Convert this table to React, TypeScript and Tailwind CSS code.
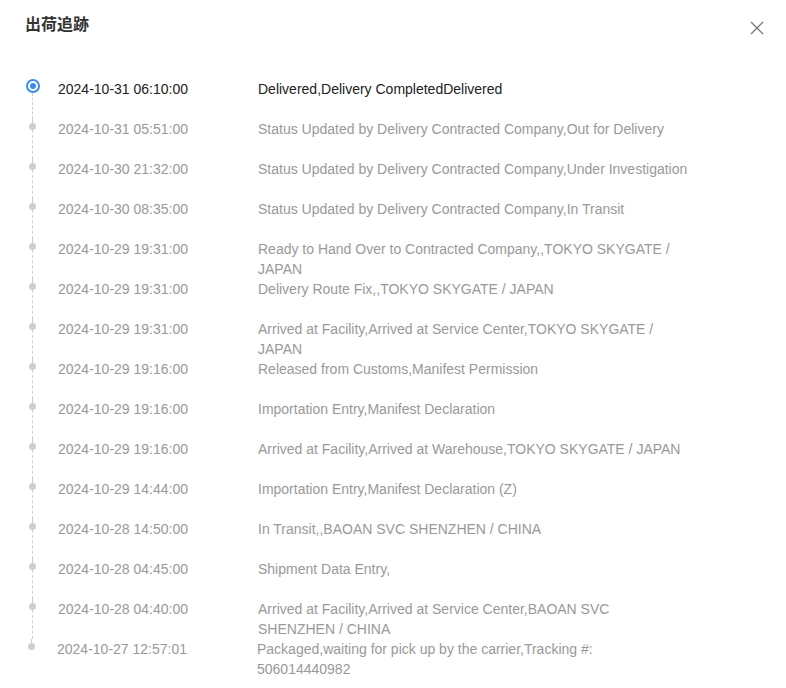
import React from "react";

type Track = { time: string; text: string };

const tracks: Track[] = [
  { time: "2024-10-31 06:10:00", text: "Delivered,Delivery CompletedDelivered" },
  { time: "2024-10-31 05:51:00", text: "Status Updated by Delivery Contracted Company,Out for Delivery" },
  { time: "2024-10-30 21:32:00", text: "Status Updated by Delivery Contracted Company,Under Investigation" },
  { time: "2024-10-30 08:35:00", text: "Status Updated by Delivery Contracted Company,In Transit" },
  { time: "2024-10-29 19:31:00", text: "Ready to Hand Over to Contracted Company,,TOKYO SKYGATE / JAPAN" },
  { time: "2024-10-29 19:31:00", text: "Delivery Route Fix,,TOKYO SKYGATE / JAPAN" },
  { time: "2024-10-29 19:31:00", text: "Arrived at Facility,Arrived at Service Center,TOKYO SKYGATE / JAPAN" },
  { time: "2024-10-29 19:16:00", text: "Released from Customs,Manifest Permission" },
  { time: "2024-10-29 19:16:00", text: "Importation Entry,Manifest Declaration" },
  { time: "2024-10-29 19:16:00", text: "Arrived at Facility,Arrived at Warehouse,TOKYO SKYGATE / JAPAN" },
  { time: "2024-10-29 14:44:00", text: "Importation Entry,Manifest Declaration (Z)" },
  { time: "2024-10-28 14:50:00", text: "In Transit,,BAOAN SVC SHENZHEN / CHINA" },
  { time: "2024-10-28 04:45:00", text: "Shipment Data Entry," },
  { time: "2024-10-28 04:40:00", text: "Arrived at Facility,Arrived at Service Center,BAOAN SVC SHENZHEN / CHINA" },
];

function Row({ item, first }: { item: Track; first: boolean }) {
  return (
    <div className="flex min-h-[40px] items-stretch">
      <div className="flex w-[13px] flex-col items-center">
        {first ? (
          <div className="flex h-[14px] w-[14px] shrink-0 items-center justify-center rounded-full border-2 border-[#3b8cf0]">
            <div className="h-[6px] w-[6px] rounded-full bg-[#3b8cf0]" />
          </div>
        ) : (
          <>
            <div className="h-[4px] border-l border-dashed border-[#cfcfcf]" />
            <div className="h-[7px] w-[7px] rounded-full bg-[#cfcfd3]" />
          </>
        )}
        <div className="flex-1 border-l border-dashed border-[#cfcfcf]" />
      </div>
      <div
        className={
          "ml-[19px] w-[200px] shrink-0 leading-[20px] " +
          (first ? "text-[#222]" : "text-[#999]")
        }
      >
        {item.time}
      </div>
      <div
        className={
          "w-[432px] leading-[20px] " + (first ? "text-[#222]" : "text-[#999]")
        }
      >
        {item.text}
      </div>
    </div>
  );
}

export default function App() {
  return (
    <div
      className="h-[688px] w-[786px] bg-white text-[14px]"
      style={{ fontFamily: '"Liberation Sans", Arial, "Noto Sans CJK JP", sans-serif' }}
    >
      <div className="flex h-[79px] items-start justify-between pl-[25px] pr-[22px] pt-[12px]">
        <h1
          className="text-[16px] font-semibold leading-[22px] text-[#333]"
          style={{ fontFamily: '"Noto Sans CJK JP", sans-serif' }}
        >
          出荷追跡
        </h1>
        <button className="mt-[9px] text-[#777]">
          <svg width="14" height="14" viewBox="0 0 14 14" fill="none">
            <path d="M1 1L13 13M13 1L1 13" stroke="currentColor" strokeWidth="1.3" />
          </svg>
        </button>
      </div>
      <div className="pl-[26px]">
        {tracks.map((t, i) => (
          <Row key={i} item={t} first={i === 0} />
        ))}
        <div className="-ml-px flex min-h-[40px] items-stretch">
          <div className="flex w-[13px] flex-col items-center">
            <div className="h-[4px] border-l border-dashed border-[#cfcfcf]" />
            <div className="h-[7px] w-[7px] rounded-full bg-[#cfcfd3]" />
          </div>
          <div className="ml-[19px] w-[200px] shrink-0 leading-[20px] text-[#999]">
            2024-10-27 12:57:01
          </div>
          <div className="w-[420px] leading-[20px] text-[#999]">
            Packaged,waiting for pick up by the carrier,Tracking #: 506014440982
          </div>
        </div>
      </div>
    </div>
  );
}
